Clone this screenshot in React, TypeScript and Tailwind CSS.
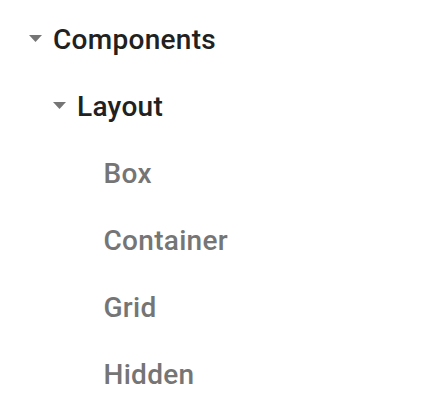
import { ReactNode } from 'react';

function Caret() {
  return (
    <svg width="13" height="7" viewBox="0 0 13 7" className="shrink-0 -mt-[3px] fill-[#757575]">
      <polygon points="0,0 13,0 6.5,7" />
    </svg>
  );
}

function Row({ indent, caret, muted, children }: {
  indent: string; caret?: boolean; muted?: boolean; children: ReactNode;
}) {
  return (
    <li className={`flex items-center h-[67px] ${indent}`}>
      {caret && <Caret />}
      <span
        className={`${caret ? 'ml-[11px]' : ''} text-[28px] leading-[67px] font-medium tracking-[0.3px] ${muted ? 'text-[#757575]' : 'text-[#212121]'}`}
      >
        {children}
      </span>
    </li>
  );
}

const LEAVES = ['Box', 'Container', 'Grid', 'Hidden'];

export default function App() {
  return (
    <div className="w-[428px] h-[400px] bg-white overflow-hidden font-['Roboto','Noto_Sans',sans-serif]">
      <ul className="pt-[6px]">
        <Row indent="pl-[29px]" caret>Components</Row>
        <Row indent="pl-[53px]" caret>Layout</Row>
        {LEAVES.map(l => (
          <Row key={l} indent="pl-[103.5px]" muted>{l}</Row>
        ))}
      </ul>
    </div>
  );
}
